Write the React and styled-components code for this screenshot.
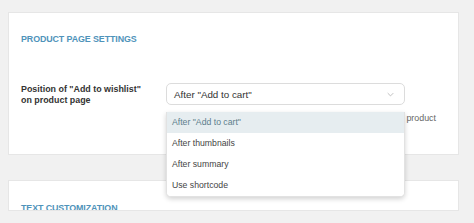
import React, { useState } from "react";
import styled, { createGlobalStyle } from "styled-components";

const options = [
  'After "Add to cart"',
  "After thumbnails",
  "After summary",
  "Use shortcode",
];

const GlobalStyle = createGlobalStyle`
  html, body {
    margin: 0;
    padding: 0;
    background: #f1f1f1;
    font-family: "Liberation Sans", Arial, Helvetica, sans-serif;
  }
`;

const App = () => {
  const [selected, setSelected] = useState(0);

  return (
    <Page>
      <GlobalStyle />
      <Card>
        <SectionTitle>Product page settings</SectionTitle>
        <Row>
          <Label>
            Position of "Add to wishlist"
            <br />
            on product page
          </Label>
          <Field>
            <Select>
              <span>{options[0]}</span>
              <Chevron viewBox="0 0 10 6">
                <path d="M1 1l4 4 4-4" />
              </Chevron>
            </Select>
            <Description>
              Choose where to show "Add to wishlist" link or button on the product
            </Description>
            <Menu>
              {options.map((opt, i) => (
                <Option
                  key={opt}
                  $active={i === selected}
                  onClick={() => setSelected(i)}
                >
                  {opt}
                </Option>
              ))}
            </Menu>
          </Field>
        </Row>
      </Card>
      <Card $short>
        <SectionTitle>Text customization</SectionTitle>
      </Card>
    </Page>
  );
};

export default App;

const Page = styled.div`
  padding: 12px 15px 0 8px;
  display: flex;
  flex-direction: column;
  gap: 25px;
  height: 223px;
  box-sizing: border-box;
  overflow: hidden;
`;

const Card = styled.div`
  background: #fff;
  border: 1px solid #e6e6e6;
  box-sizing: border-box;
  height: ${({ $short }) => ($short ? "31px" : "143px")};
  padding: ${({ $short }) => ($short ? "22px 12px 0" : "21px 12px 0")};
  overflow: ${({ $short }) => ($short ? "hidden" : "visible")};
`;

const SectionTitle = styled.h2`
  margin: 0;
  font-size: 8.9px;
  line-height: 10px;
  font-weight: 700;
  text-transform: uppercase;
  color: #4f93ba;
  letter-spacing: -0.1px;
`;

const Row = styled.div`
  display: flex;
  align-items: flex-start;
  margin-top: 39px;
`;

const Label = styled.div`
  width: 145px;
  flex-shrink: 0;
  padding-top: 1px;
  font-size: 8.9px;
  line-height: 11px;
  font-weight: 700;
  color: #333;
`;

const Field = styled.div`
  position: relative;
  width: 239px;
`;

const Select = styled.div`
  height: 22px;
  box-sizing: border-box;
  border: 1px solid #dcdcdc;
  border-radius: 5px;
  display: flex;
  align-items: center;
  justify-content: space-between;
  padding: 0 10px 0 7px;
  font-size: 9.8px;
  color: #333;
`;

const Chevron = styled.svg`
  width: 7px;
  height: 5px;
  fill: none;
  stroke: #b5b5b5;
  stroke-width: 1.2;
`;

const Description = styled.div`
  margin-top: 8px;
  white-space: nowrap;
  font-size: 8.9px;
  color: #666;
  text-align: right;
  direction: rtl;
  width: 270px;
  unicode-bidi: plaintext;
`;

const Menu = styled.div`
  position: absolute;
  top: 29px;
  left: 0;
  right: 0;
  background: #fff;
  border: 1px solid #e2e2e2;
  border-top: none;
  border-radius: 0 0 5px 5px;
  box-shadow: 0 2px 5px rgba(0, 0, 0, 0.18);
  overflow: hidden;
`;

const Option = styled.div`
  height: 21px;
  line-height: 20px;
  padding: 0 5px;
  font-size: 8.7px;
  cursor: pointer;
  color: ${({ $active }) => ($active ? "#5d7e8c" : "#444")};
  background: ${({ $active }) => ($active ? "#e6edf0" : "#fff")};
`;
